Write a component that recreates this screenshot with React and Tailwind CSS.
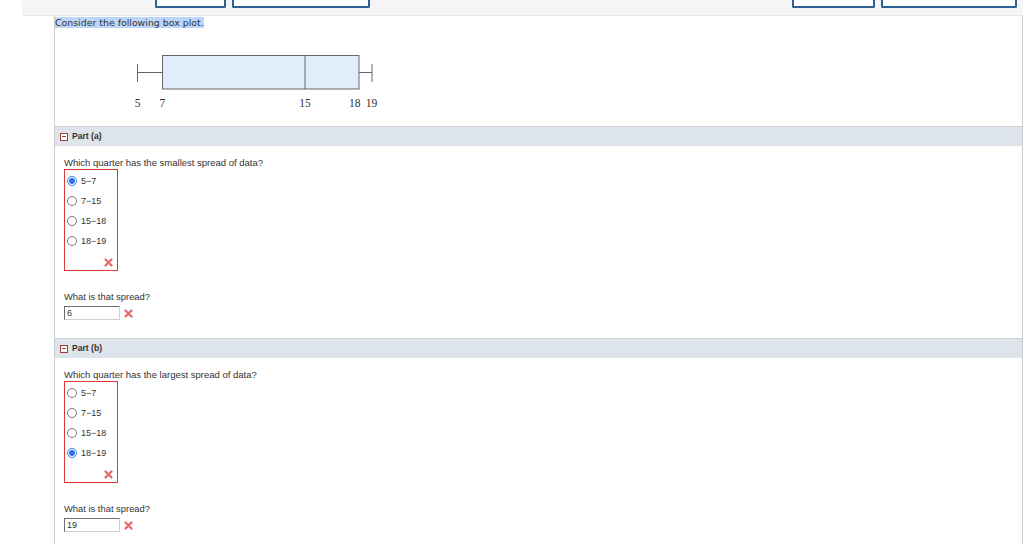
const body = { fontFamily: '"Liberation Sans", Arial, sans-serif' }

function Minus() {
  return (
    <span className="flex h-[8px] w-[8px] items-center justify-center border border-[#9e3a3a] bg-white">
      <span className="h-[1px] w-[4px] bg-[#9e3a3a]" />
    </span>
  )
}

function Cross() {
  return (
    <svg width="9" height="9" viewBox="0 0 9 9" className="block">
      <path d="M1.5 1.5 L7.5 7.5 M7.5 1.5 L1.5 7.5" stroke="#e66a6a" strokeWidth="2.3" strokeLinecap="round" />
    </svg>
  )
}

function Radio({ on }) {
  if (on) {
    return (
      <span className="flex h-[10px] w-[10px] items-center justify-center rounded-full border border-[#3b7ff0] bg-white">
        <span className="h-[6px] w-[6px] rounded-full bg-[#2f72ee]" />
      </span>
    )
  }
  return <span className="h-[10px] w-[10px] rounded-full border border-[#7a7a7a] bg-white" />
}

function PartHeader({ label }) {
  return (
    <div className="flex h-[20px] items-center gap-[4px] border-t border-[#cdd3da] bg-[#dde4ec] pl-[5px]">
      <Minus />
      <span className="text-[8.6px] font-bold text-[#333]">{label}</span>
    </div>
  )
}

function Question({ q, options, picked, answer }) {
  return (
    <div className="pl-[9px] text-[9px] leading-[12px] text-[#333]">
      <div className="pt-[11px] text-[9.5px]">{q}</div>
      <div className="w-[54px] border border-[#d93a32] pt-[1px]">
        {options.map((o, i) => (
          <div key={o} className="flex h-[20px] items-center gap-[4px] pl-[2px]">
            <Radio on={i === picked} />
            <span>{o}</span>
          </div>
        ))}
        <div className="flex h-[19px] items-end justify-end pb-[3px] pr-[4px]">
          <Cross />
        </div>
      </div>
      <div className="mt-[20px] text-[9.4px]">What is that spread?</div>
      <div className="mt-[3px] flex items-center gap-[4px]">
        <div className="flex h-[14px] w-[56px] items-center border border-t-[#6e6e6e] border-l-[#6e6e6e] border-r-[#cfcfcf] border-b-[#cfcfcf] pl-[2px]">
          {answer}
        </div>
        <Cross />
      </div>
    </div>
  )
}

export default function App() {
  const opts = ['5−7', '7−15', '15−18', '18−19']
  return (
    <div className="h-[544px] w-[1024px] overflow-hidden bg-white" style={body}>
      <div className="ml-[22px] flex h-[16px] w-[1001px] items-start border-b border-[#e6e6e6] bg-[#f5f5f5] pr-[6px]">
        <div className="ml-[133px] flex gap-[6px]">
          <span className="h-[8px] w-[71px] rounded-b-[2px] border-x-2 border-b-2 border-[#2e6193] bg-white" />
          <span className="h-[8px] w-[138px] rounded-b-[2px] border-x-2 border-b-2 border-[#2e6193] bg-white" />
        </div>
        <div className="ml-auto flex gap-[6px]">
          <span className="h-[8px] w-[83px] rounded-b-[2px] border-x-2 border-b-2 border-[#2e6193] bg-white" />
          <span className="h-[8px] w-[136px] rounded-b-[2px] border-x-2 border-b-2 border-[#2e6193] bg-white" />
        </div>
      </div>

      <div className="ml-[54px] h-[528px] w-[969px] border-x border-[#cccccc]">
        <div className="h-[14px] pt-[1px] text-[9.4px] leading-[12px]" style={{ fontFamily: '"DejaVu Sans", Verdana, sans-serif' }}>
          <span className="bg-[#bcd6fa] text-[#333]">Consider the following box plot.</span>
        </div>

        <svg width="967" height="96" viewBox="55 30 967 96" className="block">
          <g stroke="#666" strokeWidth="1" fill="none">
            <line x1="137.5" y1="64" x2="137.5" y2="82" />
            <line x1="137.5" y1="72.5" x2="162.5" y2="72.5" />
            <rect x="162.5" y="55.5" width="196.5" height="33.5" fill="#e1edfb" />
            <line x1="305" y1="55.5" x2="305" y2="89" />
            <line x1="359" y1="72.5" x2="372" y2="72.5" />
            <line x1="372" y1="64" x2="372" y2="82" />
          </g>
          <g fill="#333" fontSize="11.5" fontFamily='"Liberation Serif", "Times New Roman", serif' textAnchor="middle">
            <text x="137.7" y="106.7">5</text>
            <text x="162.3" y="106.7">7</text>
            <text x="305" y="106.7">15</text>
            <text x="354.7" y="106.7">18</text>
            <text x="371.5" y="106.7">19</text>
          </g>
        </svg>

        <PartHeader label="Part (a)" />
        <Question q="Which quarter has the smallest spread of data?" options={opts} picked={0} answer="6" />

        <div className="mt-[18px]">
          <PartHeader label="Part (b)" />
          <Question q="Which quarter has the largest spread of data?" options={opts} picked={3} answer="19" />
        </div>
      </div>
    </div>
  )
}
